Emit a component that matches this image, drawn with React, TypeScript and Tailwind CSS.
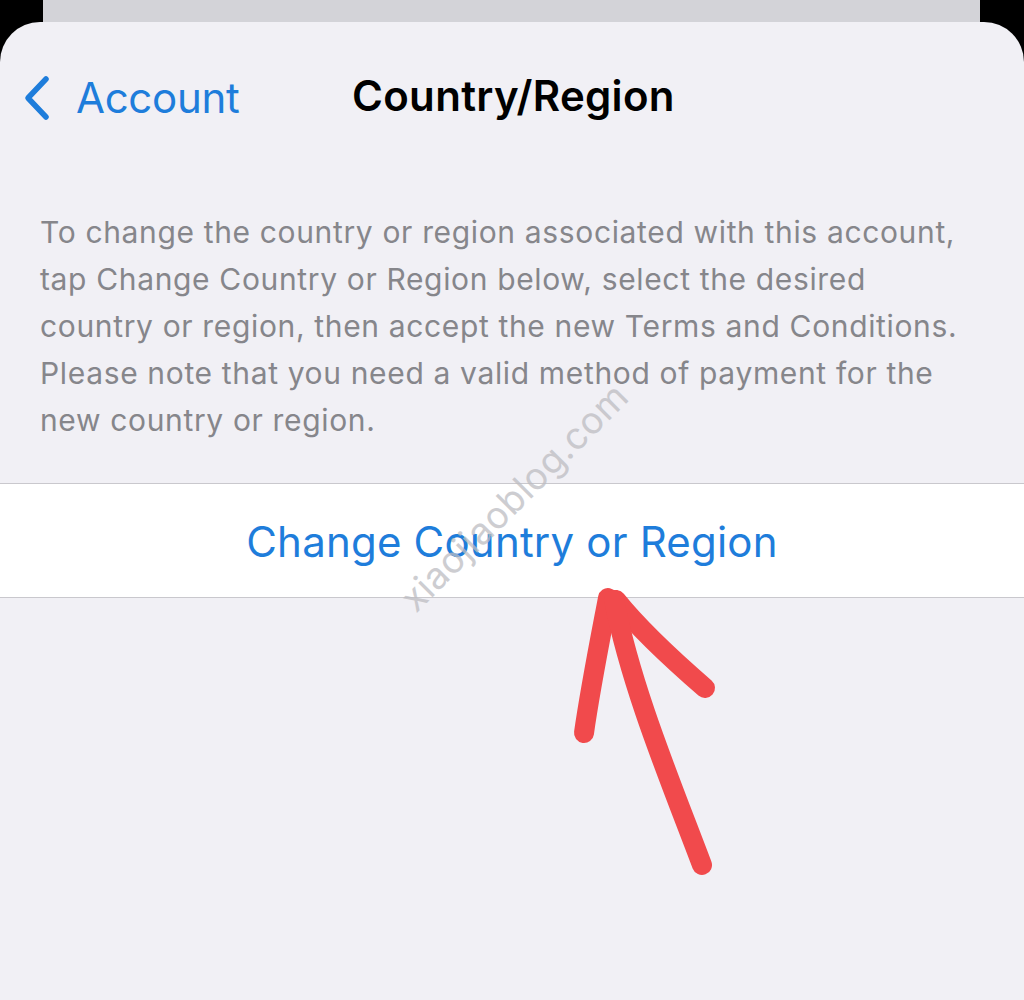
import React from "react";

function BackChevron() {
  return (
    <svg width="34" height="46" viewBox="0 0 34 46" fill="none" className="shrink-0">
      <path d="M26 4 L8 23 L26 42" stroke="#1e7ddb" strokeWidth="5.5" strokeLinecap="round" strokeLinejoin="round" />
    </svg>
  );
}

function HandArrow() {
  return (
    <svg width="1024" height="1000" viewBox="0 0 1024 1000" fill="none" className="absolute inset-0 pointer-events-none">
      <g stroke="#f14a4c" strokeWidth="20" strokeLinecap="round" strokeLinejoin="round">
        <path d="M608 598 C600 640 590 690 584 733" />
        <path d="M616 600 C640 630 675 662 705 688" />
        <path d="M614 600 C632 690 670 780 702 865" />
      </g>
    </svg>
  );
}

export default function App() {
  return (
    <div className="relative w-[1024px] h-[1000px] overflow-hidden bg-black" style={{ fontFamily: "Inter, 'Noto Sans', sans-serif" }}>
      {/* stacked sheet behind */}
      <div className="absolute left-[43px] right-[44px] top-[-40px] h-[100px] rounded-[36px] bg-[#d3d3d8]" />

      {/* front sheet */}
      <div className="absolute left-0 right-0 top-[22px] bottom-0 rounded-t-[40px] bg-[#f1f0f5] flex flex-col">
        <div className="relative h-[150px] flex items-center">
          <div className="flex items-center gap-[22px] pl-[20px] mt-[2px]">
            <BackChevron />
            <span className="text-[42px] tracking-[-0.3px] text-[#1e7ddb] leading-none">Account</span>
          </div>
          <span className="absolute left-[352px] top-[53px] text-[42px] font-semibold tracking-[0.3px] text-black leading-none">
            Country/Region
          </span>
        </div>

        <p className="mt-[37px] px-[40px] text-[30px] leading-[47px] text-[#86868b] tracking-[0.65px]">
          To change the country or region associated with this account,
          <br />
          tap Change Country or Region below, select the desired
          <br />
          country or region, then accept the new Terms and Conditions.
          <br />
          Please note that you need a valid method of payment for the
          <br />
          new country or region.
        </p>

        <div className="mt-[39px] h-[115px] bg-white border-y border-[#c9c8cd] flex items-center justify-center">
          <span className="text-[42px] tracking-[0.2px] text-[#1e7ddb] leading-none mt-[2px]">Change Country or Region</span>
        </div>
      </div>

      {/* watermark */}
      <div className="absolute left-[514px] top-[497px] -translate-x-1/2 -translate-y-1/2 -rotate-45 text-[37px] text-[#bdbdc2] opacity-75 whitespace-nowrap tracking-[0.5px]">
        xiaojiaoblog.com
      </div>

      <HandArrow />
    </div>
  );
}
